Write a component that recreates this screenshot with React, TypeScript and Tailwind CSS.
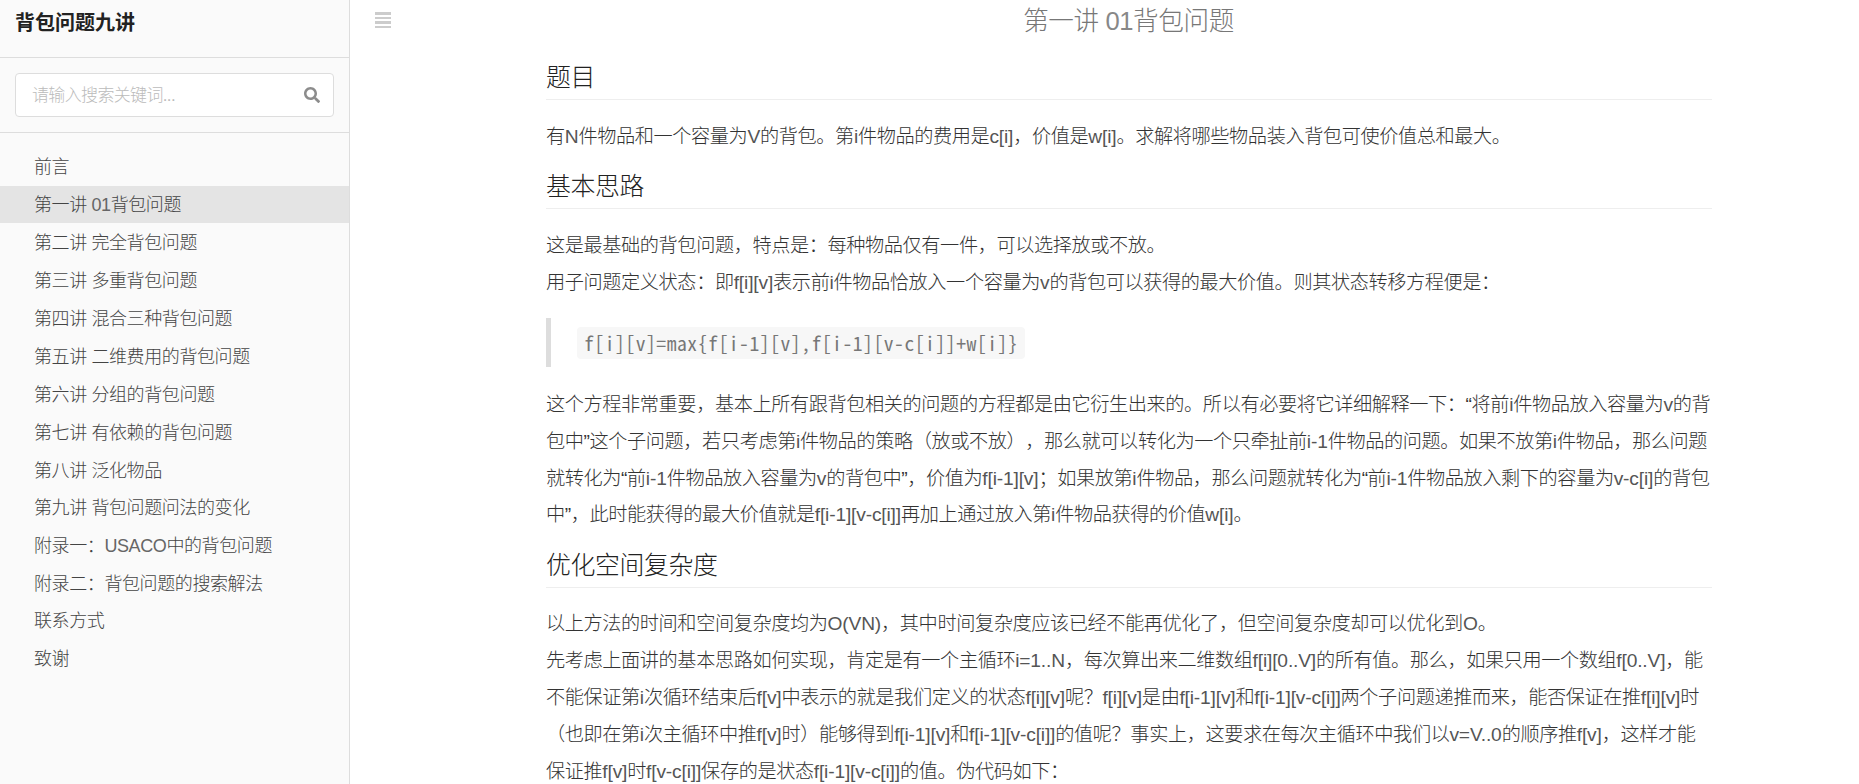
import { FaSearch } from "react-icons/fa";

const chapters = [
  "前言",
  "第一讲 01背包问题",
  "第二讲 完全背包问题",
  "第三讲 多重背包问题",
  "第四讲 混合三种背包问题",
  "第五讲 二维费用的背包问题",
  "第六讲 分组的背包问题",
  "第七讲 有依赖的背包问题",
  "第八讲 泛化物品",
  "第九讲 背包问题问法的变化",
  "附录一：USACO中的背包问题",
  "附录二：背包问题的搜索解法",
  "联系方式",
  "致谢",
];

const activeChapter = 1;

const problem = [
  "有N件物品和一个容量为V的背包。第i件物品的费用是c[i]，价值是w[i]。求解将哪些物品装入背包可使价值总和最大。",
];

const idea = [
  "这是最基础的背包问题，特点是：每种物品仅有一件，可以选择放或不放。",
  "用子问题定义状态：即f[i][v]表示前i件物品恰放入一个容量为v的背包可以获得的最大价值。则其状态转移方程便是：",
];

const explanation = [
  "这个方程非常重要，基本上所有跟背包相关的问题的方程都是由它衍生出来的。所以有必要将它详细解释一下：“将前i件物品放入容量为v的背",
  "包中”这个子问题，若只考虑第i件物品的策略（放或不放），那么就可以转化为一个只牵扯前i-1件物品的问题。如果不放第i件物品，那么问题",
  "就转化为“前i-1件物品放入容量为v的背包中”，价值为f[i-1][v]；如果放第i件物品，那么问题就转化为“前i-1件物品放入剩下的容量为v-c[i]的背包",
  "中”，此时能获得的最大价值就是f[i-1][v-c[i]]再加上通过放入第i件物品获得的价值w[i]。",
];

const optimization = [
  "以上方法的时间和空间复杂度均为O(VN)，其中时间复杂度应该已经不能再优化了，但空间复杂度却可以优化到O。",
  "先考虑上面讲的基本思路如何实现，肯定是有一个主循环i=1..N，每次算出来二维数组f[i][0..V]的所有值。那么，如果只用一个数组f[0..V]，能",
  "不能保证第i次循环结束后f[v]中表示的就是我们定义的状态f[i][v]呢？f[i][v]是由f[i-1][v]和f[i-1][v-c[i]]两个子问题递推而来，能否保证在推f[i][v]时",
  "（也即在第i次主循环中推f[v]时）能够得到f[i-1][v]和f[i-1][v-c[i]]的值呢？事实上，这要求在每次主循环中我们以v=V..0的顺序推f[v]，这样才能",
  "保证推f[v]时f[v-c[i]]保存的是状态f[i-1][v-c[i]]的值。伪代码如下：",
];

// Wraps the latin runs of a mixed string so they can be styled separately
function Mixed({ text, className }: { text: string; className: string }) {
  return text.split(/([\x21-\x7e]+)/).map((part, index) =>
    index % 2 === 1 ? (
      <span key={index} className={className}>
        {part}
      </span>
    ) : (
      part
    )
  );
}

function Heading({ children }: { children: string }) {
  return (
    <h2 className="h-[46px] border-b border-[#eee] text-[24.9px] leading-[47px] text-[#222]">
      {children}
    </h2>
  );
}

function Paragraph({ lines }: { lines: string[] }) {
  return (
    <p className="text-[19.2px] leading-[36.9px] tracking-[-0.42px] text-[#333]">
      {lines.map((line) => (
        <span key={line} className="block whitespace-nowrap">
          <Mixed text={line} className="tracking-[-0.16px] text-[#555]" />
        </span>
      ))}
    </p>
  );
}

function Sidebar() {
  return (
    <aside className="flex w-[350px] shrink-0 flex-col border-r border-[#ddd] bg-[#fafafa]">
      <h1 className="h-[58px] border-b border-[#ddd] px-[15px] pt-[9px] text-xl leading-[29px] font-bold tracking-normal text-[#222]">
        背包问题九讲
      </h1>
      <div className="border-b border-[#ddd] p-[15px]">
        <label className="flex h-11 items-center justify-between rounded-[4px] border border-[#ddd] bg-white pr-[13px] pl-4">
          <input
            type="text"
            placeholder="请输入搜索关键词..."
            className="w-60 pt-0.5 text-[17px] tracking-[-0.65px] outline-none placeholder:text-[#bbb]"
          />
          <FaSearch size={16} className="text-[#8c8c8c]" />
        </label>
      </div>
      <nav className="pt-[15px]">
        {chapters.map((chapter, index) => (
          <a
            key={chapter}
            href="#"
            className={
              index === activeChapter
                ? "block h-[37.95px] border-b border-[#fafafa] bg-[#e4e4e4] pl-[34px] text-lg leading-[38px] text-[#444]"
                : "block h-[37.95px] pl-[34px] text-lg leading-[38px] text-[#444] nth-last-2:-mt-px"
            }
          >
            <Mixed text={chapter} className="text-[#666]" />
          </a>
        ))}
      </nav>
    </aside>
  );
}

export default function App() {
  return (
    <div className="flex h-[784px] w-[1859px] overflow-hidden bg-white font-['Liberation_Sans','Noto_Sans_CJK_SC',sans-serif] font-light tracking-[-0.4px] [text-spacing-trim:space-all]">
      <Sidebar />
      <main className="min-w-0 flex-1">
        <header className="flex h-[54px] pl-[25px]">
          <button aria-label="目录" className="mt-3 flex h-4 w-4 flex-col justify-between">
            <span className="h-[3px] w-4 bg-[#ccc]" />
            <span className="h-[2px] w-4 bg-[#ccc]" />
            <span className="h-[3px] w-4 bg-[#ccc]" />
            <span className="h-[2px] w-4 bg-[#ccc]" />
          </button>
          <span className="flex-1 pt-[3px] pl-[7px] text-center text-[25.6px] leading-[37px] text-[#777]">
            <Mixed text="第一讲 01背包问题" className="text-[#888]" />
          </span>
        </header>
        <article className="ml-[196px] w-[1166px]">
          <Heading>题目</Heading>
          <div className="pt-[19px] pb-[7px]">
            <Paragraph lines={problem} />
          </div>
          <Heading>基本思路</Heading>
          <div className="pt-[19px]">
            <Paragraph lines={idea} />
          </div>
          <blockquote className="mt-[16px] flex h-[49px] items-center border-l-[5px] border-[#ddd] pl-[26px]">
            <code className="mt-px h-8 w-[448px] rounded-[4px] bg-[#f7f7f7] pl-[7px] font-['Noto_Sans_Mono_CJK_SC','DejaVu_Sans_Mono',monospace] text-[19.6px] leading-[31px] font-normal tracking-[0.54px] text-[#777]">
              f[i][v]=max&#123;f[i-1][v],f[i-1][v-c[i]]+w[i]&#125;
            </code>
          </blockquote>
          <div className="pt-[20px] pb-[8px]">
            <Paragraph lines={explanation} />
          </div>
          <Heading>优化空间复杂度</Heading>
          <div className="pt-[18px]">
            <Paragraph lines={optimization} />
          </div>
        </article>
      </main>
    </div>
  );
}
